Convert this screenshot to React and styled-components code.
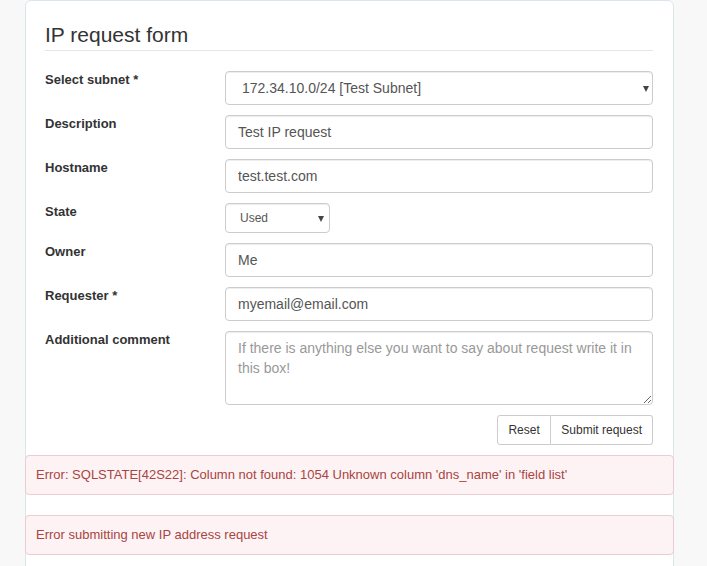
import React from 'react';
import styled, { createGlobalStyle } from 'styled-components';

const GlobalStyle = createGlobalStyle`
  html, body {
    margin: 0;
    padding: 0;
    background: #f8f8f8;
    font-family: "Liberation Sans", Arial, sans-serif;
    color: #333;
  }
  * { box-sizing: border-box; }
`;

const Page = styled.div`
  padding-left: 25px;
  width: 674px;
  min-height: 566px;
`;

const Card = styled.div`
  background: #fff;
  border: 1px solid #dde5ec;
  border-radius: 6px 6px 0 0;
  min-height: 580px;
`;

const FormArea = styled.div`
  padding: 0 20px 0 19px;
`;

const Title = styled.h3`
  margin: 0 0 20px;
  padding: 22px 0 4px;
  font-size: 21px;
  line-height: 23px;
  font-weight: 400;
  color: #333;
  border-bottom: 1px solid #e5e5e5;
`;

const Row = styled.div`
  display: grid;
  grid-template-columns: 180px 1fr;
  align-items: start;
  margin-bottom: 10px;
`;

const Label = styled.label`
  font-size: 13px;
  font-weight: 700;
  line-height: 18px;
  color: #333;
`;

const Input = styled.input`
  width: 100%;
  height: 34px;
  padding: 0 12px;
  font-family: inherit;
  font-size: 14px;
  color: #555;
  border: 1px solid #ccc;
  border-radius: 4px;
  box-shadow: inset 0 1px 1px rgba(0, 0, 0, 0.075);
  outline: none;
`;

const TextArea = styled.textarea`
  display: block;
  width: 100%;
  height: 74px;
  padding: 6px 12px;
  font-family: inherit;
  font-size: 14px;
  line-height: 20px;
  color: #555;
  border: 1px solid #ccc;
  border-radius: 4px;
  box-shadow: inset 0 1px 1px rgba(0, 0, 0, 0.075);
  outline: none;
  resize: vertical;

  &::placeholder {
    color: #999;
  }
`;

const SelectWrap = styled.div`
  position: relative;
  width: ${(p) => p.$width || '100%'};

  &::after {
    content: '';
    position: absolute;
    right: ${(p) => (p.$small ? 6 : 4)}px;
    top: 50%;
    margin-top: -2px;
    border-left: 3.5px solid transparent;
    border-right: 3.5px solid transparent;
    border-top: 6px solid #444;
    pointer-events: none;
  }
`;

const Select = styled.select`
  appearance: none;
  -webkit-appearance: none;
  width: 100%;
  height: ${(p) => (p.$small ? 30 : 34)}px;
  padding: 0 ${(p) => (p.$small ? 14 : 16)}px;
  font-family: inherit;
  font-size: ${(p) => (p.$small ? 12 : 14)}px;
  color: #555;
  background: #fff;
  border: 1px solid #ccc;
  border-radius: 4px;
  box-shadow: inset 0 1px 1px rgba(0, 0, 0, 0.075);
  outline: none;
`;

const Actions = styled.div`
  display: flex;
  justify-content: flex-end;
`;

const BtnGroup = styled.div`
  display: flex;
`;

const Button = styled.button`
  height: 30px;
  padding: 0 10px;
  font-family: inherit;
  font-size: 12px;
  color: #333;
  background: #fff;
  border: 1px solid #ccc;
  cursor: pointer;

  &:first-child {
    border-radius: 3px 0 0 3px;
    padding: 0 10.5px;
  }
  &:last-child {
    border-left: none;
    border-radius: 0 3px 3px 0;
  }
`;

const Alert = styled.div`
  margin: ${(p) => p.$top}px -1px 0;
  padding: 10px;
  font-size: 13px;
  line-height: 18px;
  color: #a94442;
  background: #fdf3f4;
  border: 1px solid #ebccd1;
  border-radius: 4px;
`;

const fields = [
  { label: 'Description', value: 'Test IP request' },
  { label: 'Hostname', value: 'test.test.com' },
];

export default function App() {
  return (
    <Page>
      <GlobalStyle />
      <Card>
        <FormArea>
          <Title>IP request form</Title>

          <Row>
            <Label>Select subnet *</Label>
            <SelectWrap>
              <Select defaultValue="1">
                <option value="1">172.34.10.0/24 [Test Subnet]</option>
              </Select>
            </SelectWrap>
          </Row>

          {fields.map((f) => (
            <Row key={f.label}>
              <Label>{f.label}</Label>
              <Input defaultValue={f.value} />
            </Row>
          ))}

          <Row>
            <Label>State</Label>
            <SelectWrap $width="105px" $small>
              <Select $small defaultValue="used">
                <option value="used">Used</option>
              </Select>
            </SelectWrap>
          </Row>

          <Row>
            <Label>Owner</Label>
            <Input defaultValue="Me" />
          </Row>

          <Row>
            <Label>Requester *</Label>
            <Input defaultValue="myemail@email.com" />
          </Row>

          <Row>
            <Label>Additional comment</Label>
            <TextArea placeholder="If there is anything else you want to say about request write it in this box!" />
          </Row>

          <Actions>
            <BtnGroup>
              <Button>Reset</Button>
              <Button>Submit request</Button>
            </BtnGroup>
          </Actions>
        </FormArea>

        <Alert $top={10}>
          Error: SQLSTATE[42S22]: Column not found: 1054 Unknown column 'dns_name' in 'field list'
        </Alert>
        <Alert $top={20}>Error submitting new IP address request</Alert>
      </Card>
    </Page>
  );
}
